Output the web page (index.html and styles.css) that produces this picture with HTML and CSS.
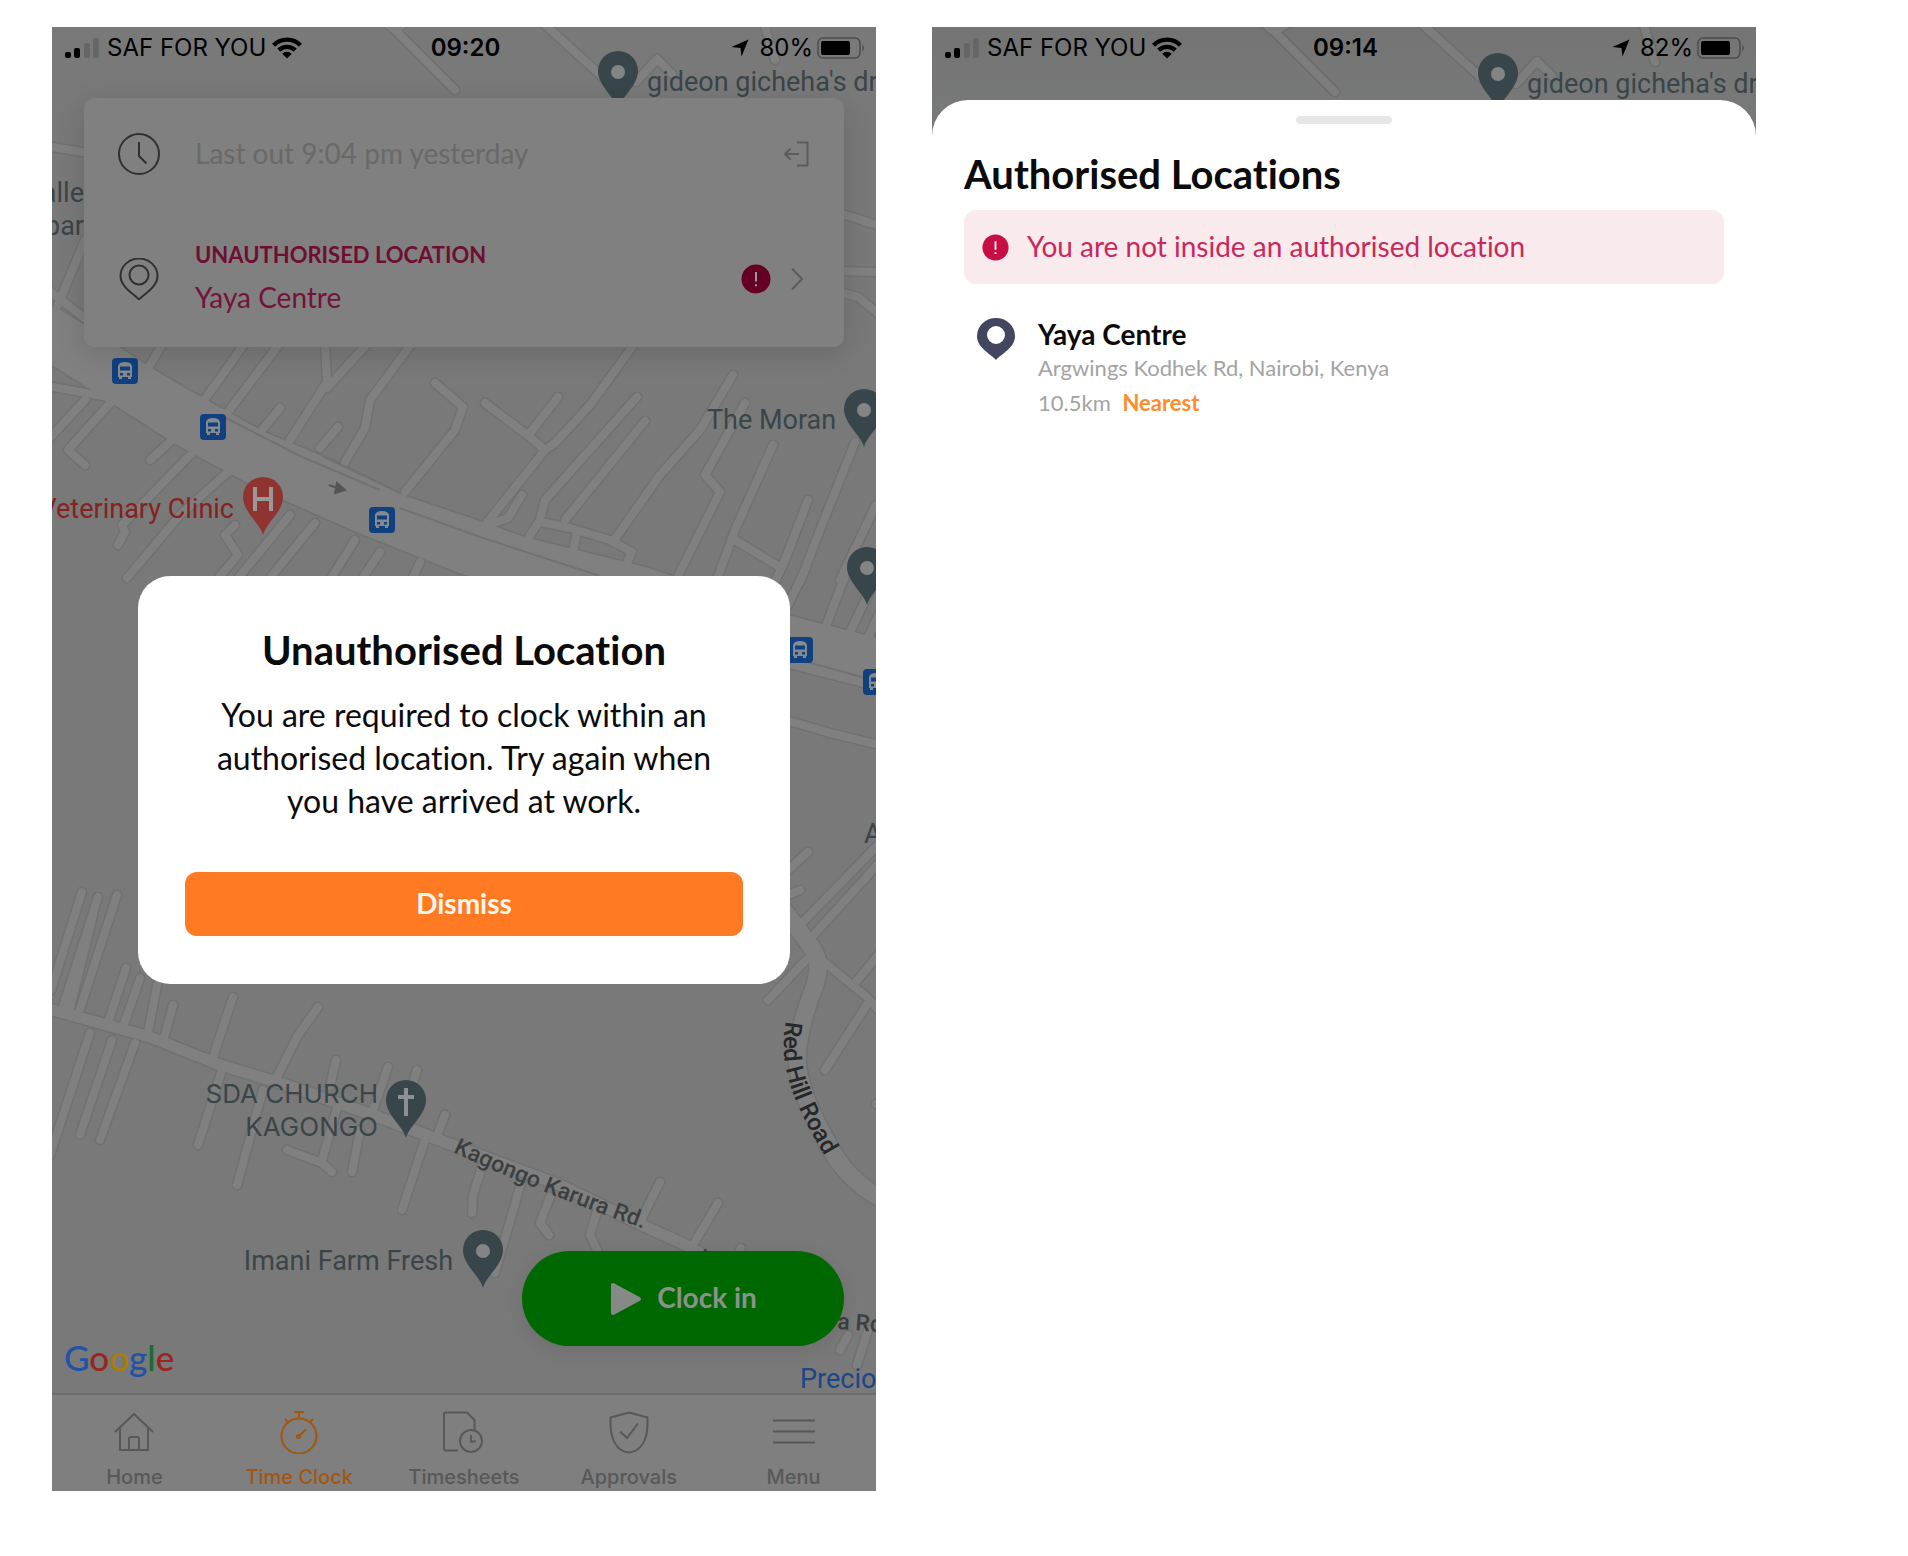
FILE: index.html
```html
<!DOCTYPE html>
<html lang="en">
<head>
<meta charset="utf-8">
<meta name="viewport" content="width=device-width, initial-scale=1">
<title>Time Clock – Authorised Locations</title>
<link rel="stylesheet" href="styles.css">
</head>
<body>
<svg class="sprite" aria-hidden="true">
  <symbol id="i-signal" viewBox="0 0 36 22">
    <rect x="0" y="15" width="6" height="6" rx="2"/><rect x="9" y="11" width="6" height="10" rx="2"/>
    <rect x="19" y="6" width="6" height="15" rx="2" fill="#666"/><rect x="28" y="1" width="6" height="20" rx="2" fill="#666"/>
  </symbol>
  <symbol id="i-wifi" viewBox="0 0 30 22">
    <g fill="none" stroke="currentColor" stroke-width="4.4"><path d="M1.600 8.200a19 19 0 0 1 26.800 0"/><path d="M6.700 13.200a12 12 0 0 1 16.600 0"/></g>
    <path d="M15 21.500l-4.800-4.700a6.900 6.900 0 0 1 9.600 0z"/>
  </symbol>
  <symbol id="i-arrow" viewBox="0 0 18 18"><path d="M17.500.5L10.500 17.500 9.500 9 0.500 8z"/></symbol>
  <symbol id="i-battery" viewBox="0 0 49 22">
    <rect x="1" y="1" width="42" height="20" rx="5" fill="none" stroke="#4c4c4c" stroke-width="1.500"/>
    <rect x="4" y="4" width="29" height="14" rx="2"/><path d="M45.500 7.500q3 3.500 0 7z" fill="#4c4c4c"/>
  </symbol>
  <symbol id="i-alert" viewBox="0 0 30 30">
    <circle cx="15" cy="15" r="14.500" fill="currentColor" stroke="none"/><path d="M15 8v9.500M15 20.300v2" fill="none" stroke-width="2"/>
  </symbol>
  <symbol id="pin" viewBox="-22 -22 44 62"><path d="M0 38C-3 26-20 15-20 0A20 20 0 0 1 20 0C20 15 3 26 0 38z"/></symbol>
  <symbol id="bus" viewBox="0 0 26 26">
    <rect width="26" height="26" rx="4" fill="#11407f"/>
    <path fill="#858a90" fill-rule="evenodd" d="M6 8q1-4 7-4t7 4v11h-1v2h-3v-2h-6v2H7v-2H6zM8 8.500v4h10v-4zM8 15v2.500h3V15zM15 15v2.500h3V15z"/>
  </symbol>
</svg>

<main class="screens">
  <section class="phone" aria-label="Time clock">
    <svg class="map" viewBox="52 27 824 1464" preserveAspectRatio="xMidYMin slice" aria-hidden="true">
      <defs>
        <g id="roads" fill="none" stroke-linecap="round" stroke-linejoin="round">
          <path d="M380 18L395 30L455 90M395 30L412 18M540 20L575 52L617 90M636 82L657 59L672 74M763 20L775 60M842 214L880 226M842 271L880 272M842 293L858 297L880 315M52 147L88 153M85 240L58 305M48 290L90 322"/>
          <path d="M48 386L113 398M85 400L48 440M113 400L68 450L85 465M163 343L150 365M245 343L203 402M280 343L228 412M280 408L262 430M325 343L327 382L290 440M368 343L327 388M338 427L320 448M412 343L370 400L365 428L345 462M435 383L463 407L455 430L405 492M172 440L150 460M192 453L122 525L125 532L118 545M228 472L180 515L127 578M235 525L225 535L238 555L215 582M290 515L235 582M315 523L265 584M355 540L330 580M380 552L360 582M420 562L410 584"/>
          <path d="M485 403L530 437L545 450M558 397L530 433M635 343L590 405L555 443L545 450L485 525M637 397L545 500L540 520L525 543M645 421L565 520M522 495L508 518L488 525M540 522L570 528L610 540L632 552L622 574M577 530L573 553M733 375L700 430L660 475L613 542M745 403L705 475L720 492L676 580M773 445L735 530L716 582M735 540L778 566M808 500L785 560L775 582M855 442L820 530L800 582M876 505L840 580"/>
          <path d="M806 568L788 605M848 568L826 626M870 590L850 632M880 612L868 638M786 720L830 733L880 745M808 852L786 872M800 890L786 896M880 843L800 925M880 862L812 937M806 960L768 1000M824 962L868 998L880 1012M868 1003L825 1070M855 983L880 953"/>
          <path d="M82 892L51 990M98 897L62 1010M93 915L69 1012M117 895L78 1015M126 968L108 1023M140 978L123 1027M157 985L148 1033M173 1005L163 1042M233 997L212 1060M318 1007L297 1037L277 1077M336 1060L330 1086M388 1067L373 1110M417 1070L410 1092M445 1115L438 1133M90 1033L50 1155M112 1040L80 1135M135 1043L100 1140M222 1070L198 1145M263 1090L237 1185M337 1108L322 1160M287 1150L322 1163L332 1172M360 1130L352 1172M425 1140L402 1210M483 1163L473 1195L472 1213M521 1183L495 1273M550 1197L540 1223L549 1235M598 1208L590 1235L597 1250M660 1182L642 1218M718 1203L693 1245M741 1248L730 1270M848 1335L840 1350M868 1330L857 1365M876 1104L880 1104"/>
        </g>
        <g id="mains" fill="none" stroke-linecap="round" stroke-linejoin="round">
          <path d="M46 1008L150 1037L220 1065L280 1083L373 1115L450 1144L560 1185L640 1224L690 1247L730 1272"/>
          <path d="M100 345L190 397L262 437L330 465L400 500L480 527L600 570"/>
        </g>
        <path id="redhill" fill="none" d="M780 905L812 948Q824 965 812 993Q798 1030 797 1060Q800 1095 826 1140Q845 1180 884 1200"/>
        <path id="highway" fill="none" d="M40 327L120 378L190 423L270 466L370 510L470 550L640 592L790 642L884 666"/>
        <path id="kagongo-line" d="M453 1152Q530 1189 650 1231"/>
        <path id="redhill-line" d="M786 1021C777 1070 795 1108 836 1174"/>
        <linearGradient id="topshade" x1="0" y1="0" x2="0" y2="1"><stop offset="0" stop-color="#747474"/><stop offset="1" stop-color="#7a7b7b"/></linearGradient>
      </defs>
      <rect x="52" y="27" width="824" height="1464" fill="#797979"/>
      <g stroke="#707171"><use href="#roads" stroke-width="11"/><use href="#mains" stroke-width="14"/><use href="#redhill" stroke-width="20"/><use href="#highway" stroke-width="54"/></g>
      <g stroke="#808080"><use href="#roads" stroke-width="8"/><use href="#mains" stroke-width="11"/><use href="#redhill" stroke-width="17"/><use href="#highway" stroke-width="51"/></g>
      <path d="M222 416L300 456L380 490M322 456L400 493M400 508L480 537L600 576M800 660L880 682" fill="none" stroke="#717272" stroke-width="2"/>
      <path d="M329 485L340 489M337 483L345 490L335 493z" stroke="#555" fill="#555" stroke-width="2"/>

      <use href="#bus" x="112" y="358" width="26" height="26"/>
      <use href="#bus" x="200" y="414" width="26" height="26"/>
      <use href="#bus" x="369" y="507" width="26" height="26"/>
      <use href="#bus" x="787" y="637" width="26" height="26"/>
      <use href="#bus" x="863" y="669" width="26" height="26"/>

      <g fill="#38464c">
        <use href="#pin" x="596" y="49" width="44" height="62"/><use href="#pin" x="842" y="387" width="44" height="62"/>
        <use href="#pin" x="845" y="545" width="44" height="62"/><use href="#pin" x="384" y="1078" width="44" height="62"/>
        <use href="#pin" x="461" y="1228" width="44" height="62"/>
      </g>
      <use href="#pin" x="241" y="475" width="44" height="62" fill="#8f3431"/>
      <g fill="#838585"><circle cx="618" cy="72" r="7"/><circle cx="864" cy="410" r="7"/><circle cx="867" cy="568" r="7"/><circle cx="483" cy="1251" r="7"/></g>
      <path d="M255 487V511M271 487V511M255 499H271" stroke="#999" stroke-width="4" fill="none"/>
      <path d="M406 1088V1116M398 1097H414" stroke="#8c9092" stroke-width="4" fill="none"/>

      <g class="place">
        <text x="647" y="91">gideon gicheha's driving</text>
        <text x="84" y="202" text-anchor="end">Valle</text>
        <text x="84" y="235" text-anchor="end">par</text>
        <text x="707" y="429">The Moran</text>
        <text x="234" y="518" text-anchor="end" class="clinic">Veterinary Clinic</text>
        <text x="378" y="1103" text-anchor="end" class="church">SDA CHURCH</text>
        <text x="378" y="1136" text-anchor="end" class="church">KAGONGO</text>
        <text x="453" y="1270" text-anchor="end">Imani Farm Fresh</text>
        <text x="864" y="843">A</text>
        <text x="800" y="1388" class="shop">Precious</text>
      </g>
      <g class="street">
        <text><textPath href="#kagongo-line">Kagongo Karura Rd.</textPath></text>
        <text class="street-strong"><textPath href="#redhill-line">Red Hill Road</textPath></text>
        <text transform="translate(696 1263) rotate(25)">Ka</text>
        <text transform="translate(837 1329) rotate(4)">a Rd.</text>
      </g>
      <text x="64" y="1371" class="google"><tspan fill="#2352a5">G</tspan><tspan fill="#98261f">o</tspan><tspan fill="#a67d08">o</tspan><tspan fill="#2352a5">g</tspan><tspan fill="#1c6a30">l</tspan><tspan fill="#98261f">e</tspan></text>
    </svg>

    <header class="status">
      <div class="status-left"><svg class="signal"><use href="#i-signal"/></svg><span>SAF FOR YOU</span><svg class="wifi"><use href="#i-wifi"/></svg></div>
      <time class="clock">09:20</time>
      <div class="status-right"><svg class="arrow"><use href="#i-arrow"/></svg><span>80%</span><svg class="battery"><use href="#i-battery"/></svg></div>
    </header>

    <div class="card">
      <div class="row">
        <svg class="row-icon" viewBox="0 0 42 42"><circle cx="21" cy="21" r="20"/><path d="M21 9V23L28.500 30.500"/></svg>
        <p class="last-out">Last out 9:04 pm yesterday</p>
        <svg class="exit" viewBox="0 0 26 26"><path d="M14 1.500H24.500V24.500H14M16 13H2M7.500 7.500L2 13L7.500 18.500"/></svg>
      </div>
      <div class="row row-location">
        <svg class="row-icon" viewBox="0 0 42 42"><path d="M21 41.500C16 36 2.500 29 2.500 18A18.500 17.500 0 0 1 39.500 18C39.500 29 26 36 21 41.500z"/><circle cx="21" cy="17" r="9.500"/></svg>
        <div class="location"><p class="warn-title">UNAUTHORISED LOCATION</p><p class="warn-place">Yaya Centre</p></div>
        <svg class="badge"><use href="#i-alert"/></svg>
        <svg class="chevron" viewBox="0 0 12 22"><path d="M1 .5L11 11L1 21.500"/></svg>
      </div>
    </div>

    <button class="clock-in" type="button">
      <svg viewBox="0 0 34 34" class="play"><path d="M4 3L30 17L4 31z"/></svg><span class="label">Clock in</span>
    </button>

    <nav class="tabs">
      <a href="#home"><svg viewBox="0 0 44 44"><path d="M3 22L22 4L41 22M8 18V40H36V18M17 40V29Q17 27 19 27H25Q27 27 27 29V40"/></svg>Home</a>
      <a href="#clock" class="active"><svg viewBox="0 0 44 44"><circle cx="22" cy="26" r="17.500"/><path d="M22 8V2M17 2H27M8 9L11.500 13M36 9L32.500 13M22 26L29 19.500"/><circle cx="21.500" cy="26.500" r="1.500"/></svg>Time Clock</a>
      <a href="#timesheets"><svg viewBox="0 0 44 44"><path d="M16 40.500H3.500Q2 40.500 2 39V4Q2 2.500 3.500 2.500H25L32.500 10V20M29 25V31.500H34"/><circle cx="29" cy="31" r="11"/></svg>Timesheets</a>
      <a href="#approvals"><svg viewBox="0 0 44 44"><path d="M22 2.500Q31 5 40.500 7.500V14C40.500 28 35 41.500 22 42.500C9 41.500 3.500 28 3.500 14V7.500Q13 5 22 2.500zM13 21.500L20 28L31 13.500"/></svg>Approvals</a>
      <a href="#menu"><svg viewBox="0 0 44 44"><path d="M1 10.500H43M1 21.500H43M1 32.500H43"/></svg>Menu</a>
    </nav>

    <div class="overlay">
      <div class="modal" role="dialog" aria-labelledby="modal-title">
        <h2 id="modal-title">Unauthorised Location</h2>
        <p>You are required to clock within an authorised location. Try again when you have arrived at work.</p>
        <button type="button" class="dismiss">Dismiss</button>
      </div>
    </div>
  </section>

  <section class="phone" aria-label="Authorised locations">
    <svg class="map" viewBox="52 25 824 1464" preserveAspectRatio="xMidYMin slice" aria-hidden="true">
      <rect x="52" y="25" width="824" height="130" fill="url(#topshade)"/>
      <use href="#roads" stroke="#6c6d6d" stroke-width="11"/><use href="#roads" stroke="#7d7d7d" stroke-width="8"/>
      <use href="#pin" x="596" y="49" width="44" height="62" fill="#38464c"/><circle cx="618" cy="72" r="7" fill="#838585"/>
      <g class="place"><text x="647" y="91">gideon gicheha's driving</text></g>
    </svg>
    <header class="status">
      <div class="status-left"><svg class="signal"><use href="#i-signal"/></svg><span>SAF FOR YOU</span><svg class="wifi"><use href="#i-wifi"/></svg></div>
      <time class="clock">09:14</time>
      <div class="status-right"><svg class="arrow"><use href="#i-arrow"/></svg><span>82%</span><svg class="battery"><use href="#i-battery"/></svg></div>
    </header>
    <div class="sheet">
      <div class="handle"></div>
      <h1>Authorised Locations</h1>
      <div class="alert" role="alert"><svg class="alert-icon"><use href="#i-alert"/></svg><span class="label">You are not inside an authorised location</span></div>
      <div class="site">
        <svg class="site-pin" viewBox="0 0 38 42"><path fill-rule="evenodd" d="M19 42C14 36 0 30 0 18A19 18 0 0 1 38 18C38 30 24 36 19 42zM19 8A9 9 0 1 0 19 26A9 9 0 1 0 19 8z"/></svg>
        <div>
          <h3>Yaya Centre</h3>
          <p>Argwings Kodhek Rd, Nairobi, Kenya</p>
          <p class="distance">10.5km <strong>Nearest</strong></p>
        </div>
      </div>
    </div>
  </section>
</main>
</body>
</html>
```
FILE: styles.css
```css
* { box-sizing: border-box; }
body { margin: 0; background: #fff; font-family: Lato, "Open Sans", sans-serif; font-variant-ligatures: none; color: #0b0b0b; }
h1, h2, h3, p { margin: 0; }
button { border: 0; font-family: inherit; cursor: pointer; }
.sprite { position: absolute; width: 0; height: 0; }

.screens { display: grid; grid-template-columns: 1fr 1fr; gap: 56px; padding: 27px 152px 64px 52px; }
.phone { position: relative; display: flex; flex-direction: column; overflow: hidden; aspect-ratio: 824 / 1464; }
.phone > * { position: relative; }
.phone > .map { position: absolute; inset: 0; width: 100%; height: 100%; }

/* Map lettering */
.place { font: 400 27px Roboto, sans-serif; fill: #3a4549; }
.church { font: 400 26px Inter, sans-serif; }
.clinic { fill: #86211f; }
.shop { fill: #1b4688; }
.street { font: 500 23px Roboto, sans-serif; fill: #3c3f40; }
.street-strong { font-size: 24px; fill: #262728; }
.google { font: 500 35px Lato, sans-serif; }

/* Phone status bar */
.status { display: grid; grid-template-columns: 1fr auto 1fr; align-items: center; height: 42px; padding: 0 10px 0 13px; font: 400 24px/24px Inter, sans-serif; color: #000; }
.status-left, .status-right { display: flex; align-items: center; }
.status-right { justify-content: flex-end; }
.clock { font-weight: 600; }
.signal { width: 36px; height: 22px; margin-right: 6px; }
.wifi { width: 30px; height: 22px; margin-left: 6px; }
.arrow { width: 18px; height: 18px; margin-right: 10px; }
.battery { width: 49px; height: 22px; margin-left: 4px; }

/* Shift card */
.card { margin: 29px 32px 0; padding: 35px 35px 24px 34px; border-radius: 10px; background: #808080; box-shadow: 0 6px 28px rgba(0, 0, 0, .14); }
.row { display: flex; align-items: center; height: 42px; }
.row-icon { flex: none; width: 42px; height: 42px; margin-right: 35px; fill: none; stroke: #303030; stroke-width: 2; }
.row-location { height: 88px; margin-top: 60px; }
.last-out { flex: 1; padding-bottom: 2px; font-size: 28px; line-height: 36px; color: #696969; }
.location { flex: 1; padding-bottom: 4px; }
.warn-title { font-size: 22px; line-height: 40px; font-weight: 700; color: #6e0e32; }
.warn-place { font-size: 28px; line-height: 44px; color: #74133a; }
.exit { width: 26px; height: 26px; fill: none; stroke: #5c5c5c; stroke-width: 2; }
.badge { width: 30px; height: 30px; margin-right: 20px; color: #650024; stroke: #999; }
.chevron { width: 12px; height: 22px; margin-right: 6px; fill: none; stroke: #5c5c5c; stroke-width: 2; }

.clock-in { display: flex; align-items: center; justify-content: center; gap: 14px; width: 322px; height: 95px; margin: auto 32px 47px auto; border-radius: 48px; background: #006800; box-shadow: 0 4px 18px rgba(0, 0, 0, .1); color: #8b918b; font-size: 28px; line-height: 36px; font-weight: 700; }
.label { padding-bottom: 3px; }
.play { width: 34px; height: 34px; fill: #868a86; stroke: #868a86; stroke-width: 4; stroke-linejoin: round; }

.tabs { display: grid; grid-template-columns: repeat(5, 1fr); height: 98px; border-top: 2px solid #6c6c6c; background: #7f7f7f; }
.tabs a { display: flex; flex-direction: column; align-items: center; gap: 11px; padding-top: 15px; color: #585858; font: 500 20px/24px Inter, sans-serif; text-decoration: none; }
.tabs svg { width: 44px; height: 44px; fill: none; stroke: currentColor; stroke-width: 2; }
.tabs .active { color: #a3560f; }

.phone > .overlay { position: absolute; inset: 0; display: grid; place-items: center; padding: 41px 86px 0; }
.modal { width: 100%; padding: 50px 47px 48px; border-radius: 32px; background: #fff; text-align: center; }
.modal h2 { font-size: 40px; line-height: 48px; font-weight: 700; }
.modal p { margin: 19px 24px 50px; font-size: 32px; line-height: 43px; }
.dismiss { display: block; width: 100%; height: 64px; padding-bottom: 3px; border-radius: 12px; background: #ff7a23; color: #fff6ec; font-size: 28px; line-height: 36px; font-weight: 700; }

/* Locations sheet */
.sheet { flex: 1; margin-top: 31px; padding: 16px 32px; border-radius: 36px 36px 0 0; background: #fff; }
.handle { width: 96px; height: 8px; margin: 0 auto; border-radius: 4px; background: #e7e7e7; }
.sheet h1 { margin-top: 26px; font-size: 40px; line-height: 48px; font-weight: 700; }
.alert { display: flex; align-items: center; gap: 18px; height: 74px; margin-top: 12px; padding: 0 18px; border-radius: 12px; background: #f9eaed; color: #c9285a; font-size: 28px; line-height: 36px; }
.alert-icon { width: 27px; height: 27px; color: #c80f44; stroke: #fff; }
.site { display: flex; gap: 23px; margin-top: 34px; padding-left: 13px; }
.site-pin { flex: none; width: 38px; height: 42px; fill: #42475f; }
.site h3 { font-size: 28px; line-height: 32px; font-weight: 700; }
.site p { font-size: 22px; line-height: 35px; color: #a3a3a3; }
.site strong { margin-left: 6px; color: #ff8c2a; }
```
